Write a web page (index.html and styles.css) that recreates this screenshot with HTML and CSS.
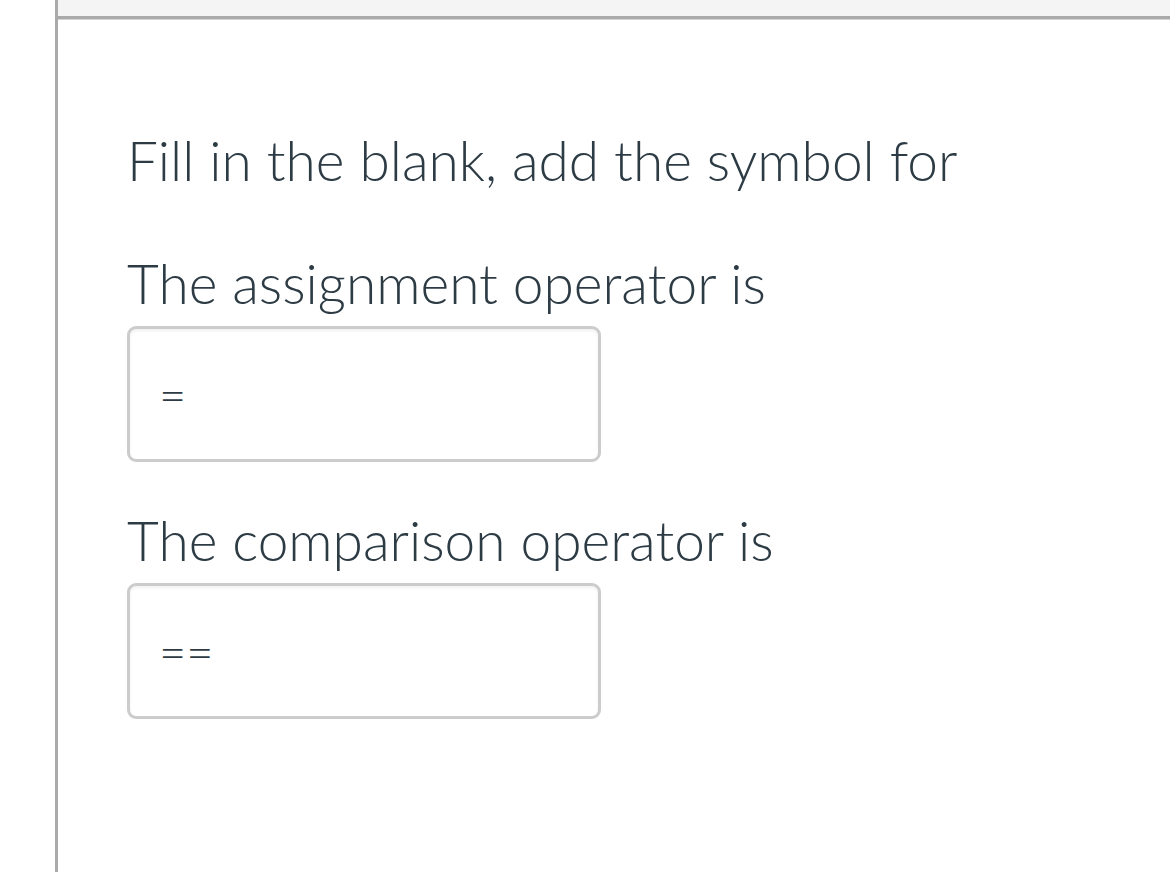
FILE: index.html
```html
<!DOCTYPE html>
<html lang="en">
<head>
  <meta charset="UTF-8" />
  <meta name="viewport" content="width=device-width, initial-scale=1.0" />
  <title>Quiz Question</title>
  <link rel="stylesheet" href="styles.css">
</head>
<body>

  <div class="question-frame">
    <div class="question-header"></div>

    <div class="question-text">
      <p class="prompt">Fill in the blank, add the symbol for</p>

      <p class="blank-label">The assignment operator is</p>
      <input class="blank-input" type="text" value="=" />

      <p class="blank-label">The comparison operator is</p>
      <input class="blank-input" type="text" value="==" />
    </div>
  </div>

</body>
</html>
```

FILE: styles.css
```css
body {
  margin: 0;
  background-color: #fff;
  font-family: Lato, 'Noto Sans', sans-serif;
  color: #2d3b45;
}
.question-frame {
  margin-left: 55px;
  min-height: 872px;
  border-left: 3px solid #aaaaaa;
}
.question-header {
  height: 16px;
  background-color: #f4f4f4;
  border-bottom: 3px solid #aaaaaa;
  box-shadow: 0 1px 0 #d4d4d4;
}
.question-text {
  padding: 110px 0 0 69px;
}
.question-text p {
  margin: 0;
  font-size: 55px;
  font-weight: 300;
  line-height: 62px;
}
.prompt {
  margin-bottom: 61px !important;
}
.blank-input {
  display: block;
  box-sizing: border-box;
  width: 474px;
  height: 136px;
  margin: 12px 0 47px;
  padding: 0 29px;
  border: 3px solid #cccccc;
  border-radius: 9px;
  box-shadow: inset 0 2px 3px rgba(0, 0, 0, 0.06);
  font-family: Lato, 'Noto Sans', sans-serif;
  font-size: 47px;
  font-weight: 300;
  color: #2d3b45;
  background-color: #fff;
  outline: none;
}
```
